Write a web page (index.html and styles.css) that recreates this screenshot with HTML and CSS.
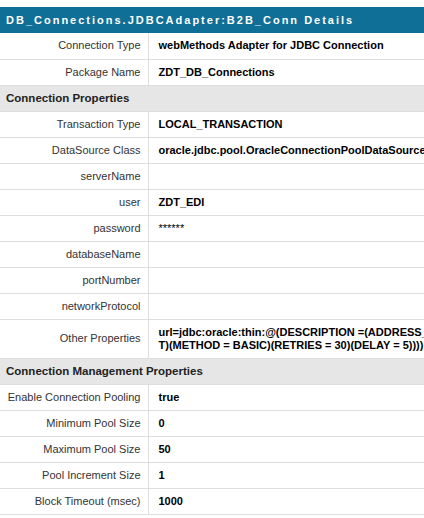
FILE: index.html
```html
<!DOCTYPE html>
<html lang="en">
<head>
  <meta charset="UTF-8">
  <title>JDBC Adapter Connection Details</title>
  <link rel="stylesheet" href="styles.css">
</head>
<body>

<table class="details">
  <colgroup><col class="label-col"><col></colgroup>
  <tr><td class="title" colspan="2">DB_Connections.JDBCAdapter:B2B_Conn Details</td></tr>

  <tr><td class="label">Connection Type</td><td class="value">webMethods Adapter for JDBC Connection</td></tr>
  <tr><td class="label">Package Name</td><td class="value">ZDT_DB_Connections</td></tr>

  <!-- Connection Properties -->
  <tr><td class="section" colspan="2">Connection Properties</td></tr>
  <tr><td class="label">Transaction Type</td><td class="value">LOCAL_TRANSACTION</td></tr>
  <tr><td class="label">DataSource Class</td><td class="value">oracle.jdbc.pool.OracleConnectionPoolDataSource</td></tr>
  <tr><td class="label">serverName</td><td class="value"></td></tr>
  <tr><td class="label">user</td><td class="value">ZDT_EDI</td></tr>
  <tr><td class="label">password</td><td class="value plain">******</td></tr>
  <tr><td class="label">databaseName</td><td class="value"></td></tr>
  <tr><td class="label">portNumber</td><td class="value"></td></tr>
  <tr><td class="label">networkProtocol</td><td class="value"></td></tr>
  <tr><td class="label">Other Properties</td><td class="value">url=jdbc:oracle:thin:@(DESCRIPTION =(ADDRESS_LIST =(ADDRESS = (PROTOCOL = TCP)(HOST = zdtdb01)(PORT = 1521)))(CONNECT_DATA =(SERVICE_NAME = ZDT)(FAILOVER_MODE =(TYPE = SELEC<br>T)(METHOD = BASIC)(RETRIES = 30)(DELAY = 5))))</td></tr>

  <!-- Connection Management Properties -->
  <tr><td class="section" colspan="2">Connection Management Properties</td></tr>
  <tr><td class="label">Enable Connection Pooling</td><td class="value">true</td></tr>
  <tr><td class="label">Minimum Pool Size</td><td class="value">0</td></tr>
  <tr><td class="label">Maximum Pool Size</td><td class="value">50</td></tr>
  <tr><td class="label">Pool Increment Size</td><td class="value">1</td></tr>
  <tr><td class="label">Block Timeout (msec)</td><td class="value">1000</td></tr>
</table>

</body>
</html>
```

FILE: styles.css
```css
* { margin: 0; padding: 0; box-sizing: border-box; }
body, html { background: #fff; overflow: hidden; font-family: 'Liberation Sans', Arial, sans-serif; font-size: 11px; }

.details { margin-top: 7px; width: 640px; border-collapse: collapse; table-layout: fixed; }
.details .label-col { width: 148px; }
.details td { height: 26px; line-height: 13px; padding: 6px 0; border-bottom: 1px solid #dedede; vertical-align: middle; }

.details .title { height: 26px; padding: 0 6px; background: #106f96; color: #fff; font-weight: bold; letter-spacing: 2px; border-bottom: none; }

.details .label { padding-right: 7px; text-align: right; color: #333; border-right: 1px solid #dedede; }
.details .value { padding-left: 10px; color: #000; font-weight: bold; white-space: nowrap; overflow: hidden; }
.details .value.plain { font-weight: normal; }

.details .section { padding-left: 6px; background: #e6e6e6; color: #222; font-weight: bold; font-size: 11.5px; }
```
